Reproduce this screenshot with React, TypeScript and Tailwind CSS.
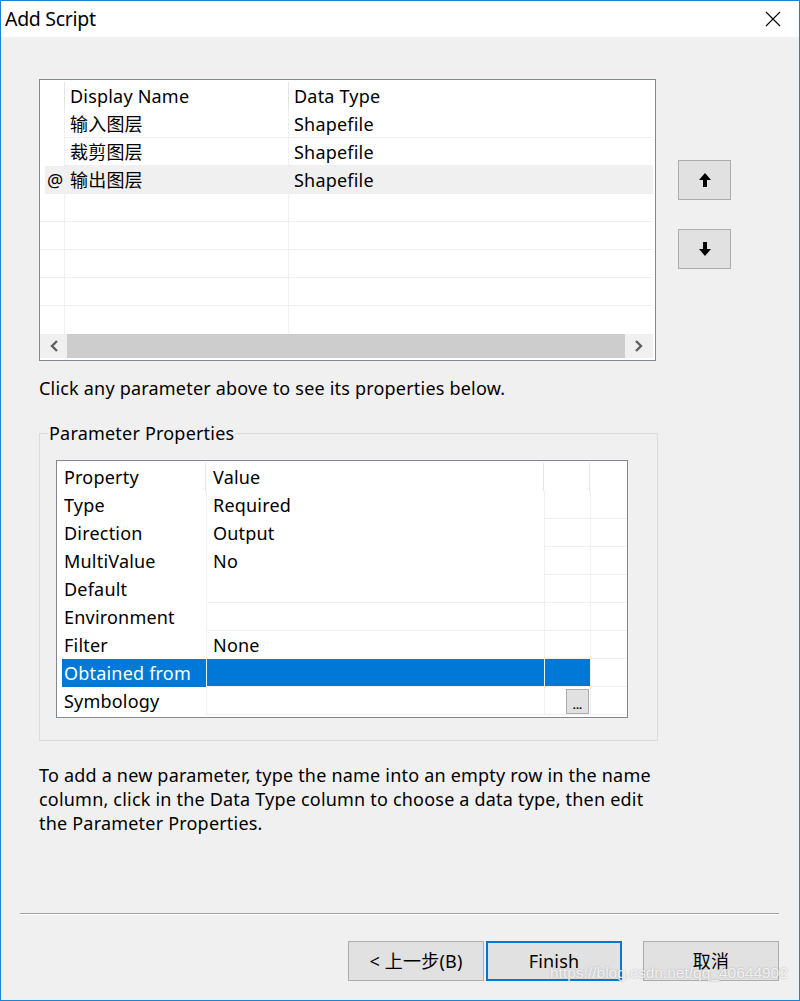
import React from "react";

const font = { fontFamily: '"Noto Sans", "Noto Sans CJK SC", sans-serif' };

const params = [
  { name: "输入图层", type: "Shapefile", mark: "" },
  { name: "裁剪图层", type: "Shapefile", mark: "" },
  { name: "输出图层", type: "Shapefile", mark: "@", current: true },
];

const props = [
  { k: "Type", v: "Required" },
  { k: "Direction", v: "Output" },
  { k: "MultiValue", v: "No" },
  { k: "Default", v: "" },
  { k: "Environment", v: "" },
  { k: "Filter", v: "None" },
  { k: "Obtained from", v: "", selected: true },
  { k: "Symbology", v: "", button: true },
];

function ArrowUp() {
  return (
    <svg width="12" height="14" viewBox="0 0 12 14">
      <path d="M6 0 L12 7 L8 7 L8 14 L4 14 L4 7 L0 7 Z" fill="#000" />
    </svg>
  );
}

function ArrowDown() {
  return (
    <svg width="12" height="14" viewBox="0 0 12 14">
      <path d="M6 14 L12 7 L8 7 L8 0 L4 0 L4 7 L0 7 Z" fill="#000" />
    </svg>
  );
}

function Chevron({ dir }: { dir: "left" | "right" }) {
  return (
    <svg width="10" height="12" viewBox="0 0 10 12">
      <path
        d={dir === "left" ? "M8 1 L3 6 L8 11" : "M2 1 L7 6 L2 11"}
        stroke="#606060"
        strokeWidth="2.4"
        fill="none"
      />
    </svg>
  );
}

function ParamTable() {
  const empty = [0, 1, 2, 3];
  return (
    <div className="w-[617px] h-[282px] border border-[#828790] bg-white flex flex-col">
      {/* header */}
      <div className="flex h-[30px] pt-[2px] text-black">
        <div className="w-[25px] border-r border-[#e5e5e5]" />
        <div className="w-[224px] border-r border-[#e5e5e5] pl-[5px] leading-[28px]">Display Name</div>
        <div className="flex-1 pl-[5px] leading-[28px]">Data Type</div>
      </div>
      {params.map((p) => (
        <div key={p.name} className="flex h-[28px] mr-[2px]">
          <div className="w-[25px] border-r border-[#f0f0f0] flex">
            <div className={`ml-[5px] flex-1 leading-[28px] pl-[2px] ${p.current ? "bg-[#f0f0f0]" : ""}`}>{p.mark}</div>
          </div>
          <div className={`w-[224px] border-r border-b border-[#f0f0f0] pl-[5px] leading-[28px] ${p.current ? "bg-[#f0f0f0]" : ""}`}>{p.name}</div>
          <div className={`flex-1 border-b border-[#f0f0f0] pl-[5px] leading-[28px] ${p.current ? "bg-[#f0f0f0]" : ""}`}>{p.type}</div>
        </div>
      ))}
      {empty.map((i) => (
        <div key={i} className="flex h-[28px] mr-[2px]">
          <div className="w-[25px] border-r border-b border-[#f0f0f0]" />
          <div className="w-[224px] border-r border-b border-[#f0f0f0]" />
          <div className="flex-1 border-b border-[#f0f0f0]" />
        </div>
      ))}
      <div className="flex h-[28px] mr-[2px]">
        <div className="w-[25px] border-r border-[#f0f0f0]" />
        <div className="w-[224px] border-r border-[#f0f0f0]" />
        <div className="flex-1" />
      </div>
      {/* horizontal scrollbar */}
      <div className="flex h-[24px] bg-[#f0f0f0] mr-[2px]">
        <div className="w-[27px] flex items-center justify-center">
          <Chevron dir="left" />
        </div>
        <div className="flex-1 bg-[#cdcdcd]" />
        <div className="w-[28px] flex items-center justify-center">
          <Chevron dir="right" />
        </div>
      </div>
    </div>
  );
}

function PropGrid() {
  return (
    <div className="w-[572px] h-[258px] border border-[#828790] bg-white flex flex-col">
      <div className="flex h-[30px] pt-[2px]">
        <div className="w-[5px]" />
        <div className="w-[144px] pl-[2px] leading-[28px] border-r border-[#e5e5e5]">Property</div>
        <div className="w-[338px] pl-[7px] leading-[28px] border-r border-[#e5e5e5]">Value</div>
        <div className="w-[46px] border-r border-[#e5e5e5]" />
        <div className="flex-1" />
      </div>
      {props.map((r) => (
        <div key={r.k} className="flex h-[28px]">
          <div className="w-[5px]" />
          <div className="w-[145px] flex flex-col border-r border-[#f0f0f0]">
            <div className={`flex-1 pl-[2px] leading-[28px] ${r.selected ? "bg-[#0078d7] text-white" : ""}`}>{r.k}</div>
            <div className="h-[1px] bg-[#f0f0f0]" />
          </div>
          <div className="w-[338px] flex flex-col border-r border-[#f0f0f0]">
            <div className={`flex-1 pl-[6px] leading-[28px] ${r.selected ? "bg-[#0078d7] text-white" : ""}`}>{r.v}</div>
            <div className="h-[1px] bg-[#f0f0f0]" />
          </div>
          <div className="w-[46px] flex flex-col border-r border-[#f0f0f0]">
            <div className={`flex-1 flex items-center justify-end pr-[1px] ${r.selected ? "bg-[#0078d7]" : ""}`}>
              {r.button && (
                <div className="w-[23px] h-[25px] mt-[1px] bg-[#e1e1e1] border border-[#adadad] flex items-end justify-center pb-[3px] text-[11px] leading-[10px] font-bold tracking-normal">
                  ...
                </div>
              )}
            </div>
            <div className="h-[1px] bg-[#f0f0f0]" />
          </div>
          <div className="flex-1 flex flex-col">
            <div className="flex-1" />
            <div className="h-[1px] bg-[#f0f0f0]" />
          </div>
        </div>
      ))}
    </div>
  );
}

function Button({ children, primary }: { children: React.ReactNode; primary?: boolean }) {
  return (
    <div
      className={`w-[136px] h-[40px] flex items-center justify-center bg-[#e1e1e1] ${
        primary ? "border-2 border-[#0078d7]" : "border border-[#adadad]"
      }`}
    >
      {children}
    </div>
  );
}

export default function App() {
  return (
    <div
      style={font}
      className="relative w-[800px] h-[1001px] border border-[#1883d7] bg-[#f0f0f0] flex flex-col text-[18px] tracking-[0.2px] text-black overflow-hidden"
    >
      {/* title bar */}
      <div className="h-[36px] bg-white flex items-center justify-between pl-[4px] pr-[18px]">
        <span className="text-[19.5px] tracking-[-0.3px]">Add Script</span>
        <svg width="16" height="16" viewBox="0 0 16 16">
          <path d="M1 1 L15 15 M15 1 L1 15" stroke="#000" strokeWidth="1.1" />
        </svg>
      </div>

      <div className="flex flex-col pl-[38px]">
        <div className="flex mt-[42px]">
          <ParamTable />
          <div className="flex flex-col ml-[22px] mt-[81px] gap-[29px]">
            <div className="w-[53px] h-[40px] bg-[#e1e1e1] border border-[#adadad] flex items-center justify-center">
              <ArrowUp />
            </div>
            <div className="w-[53px] h-[40px] bg-[#e1e1e1] border border-[#adadad] flex items-center justify-center">
              <ArrowDown />
            </div>
          </div>
        </div>

        <div className="mt-[15px] leading-[24px]">Click any parameter above to see its properties below.</div>

        {/* group box */}
        <div className="relative mt-[33px] w-[619px] h-[308px] border border-[#dcdcdc] pt-[26px] pl-[16px]">
          <span className="absolute left-[8px] top-[-13px] bg-[#f0f0f0] px-[1px] leading-[24px]">Parameter Properties</span>
          <PropGrid />
        </div>

        <div className="mt-[22px] leading-[24px]">
          To add a new parameter, type the name into an empty row in the name
          <br />
          column, click in the Data Type column to choose a data type, then edit
          <br />
          the Parameter Properties.
        </div>
      </div>

      {/* separator */}
      <div className="mt-auto mx-[19px] w-[759px] border-t border-[#a0a0a0] border-b border-b-white" />

      <div className="flex items-center mt-[26px] mb-[19px] pl-[347px] gap-[2px]">
        <Button>&lt; 上一步(B)</Button>
        <Button primary>Finish</Button>
        <div className="ml-[19px]">
          <Button>取消</Button>
        </div>
      </div>

      <span
        className="absolute left-[549px] top-[960px] text-[15.5px] text-white/80 tracking-[0px]"
        style={{ textShadow: "0 0 2px rgba(120,120,120,0.6)", fontFamily: '"Liberation Sans", sans-serif' }}
      >
        https://blog.csdn.net/qq_40644902
      </span>
    </div>
  );
}
